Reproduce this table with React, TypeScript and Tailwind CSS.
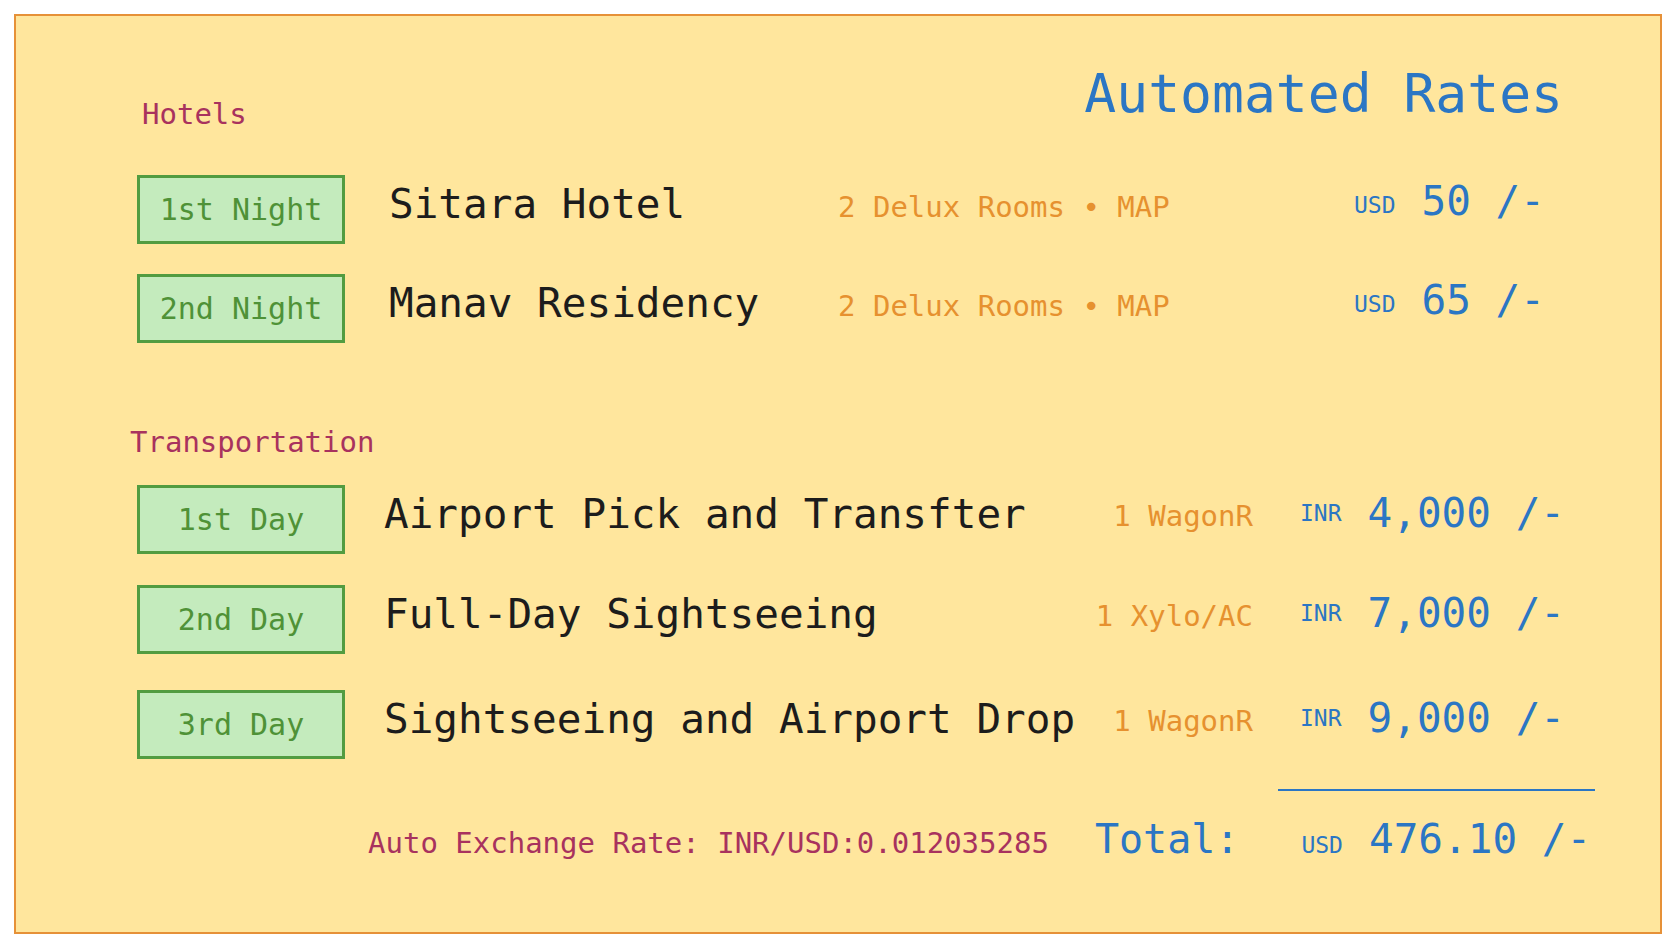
import React from "react";

interface Hotel {
  night: string;
  name: string;
  detalle: string;
  monto: string;
}

interface Transporte {
  dia: string;
  nombre: string;
  vehiculo: string;
  monto: string;
}

const hoteles: Hotel[] = [
  { night: "1st Night", name: "Sitara Hotel", detalle: "2 Delux Rooms • MAP", monto: "50 /-" },
  { night: "2nd Night", name: "Manav Residency", detalle: "2 Delux Rooms • MAP", monto: "65 /-" },
];

const transportes: Transporte[] = [
  { dia: "1st Day", nombre: "Airport Pick and Transfter", vehiculo: "1 WagonR", monto: "4,000 /-" },
  { dia: "2nd Day", nombre: "Full-Day Sightseeing", vehiculo: "1 Xylo/AC", monto: "7,000 /-" },
  { dia: "3rd Day", nombre: "Sightseeing and Airport Drop", vehiculo: "1 WagonR", monto: "9,000 /-" },
];

const mono = "font-['DejaVu_Sans_Mono','Liberation_Mono',monospace]";

function Badge({ texto }: { texto: string }) {
  return (
    <div className="w-[208px] h-[69px] shrink-0 flex items-center justify-center border-[3px] border-[#529c41] bg-[#c4ebbd] text-[#4f9237] text-[30px] leading-none">
      {texto}
    </div>
  );
}

export default function App() {
  return (
    <div className={`w-full h-[948px] bg-white pl-[14px] pt-[14px] ${mono}`}>
      <div className="w-[1648px] h-[920px] border-2 border-[#e69138] bg-[#ffe69d] pt-[51px] flex flex-col">
        <div className="flex items-start">
          <span className="ml-[126px] mt-[33px] text-[29px] leading-none text-[#a8325e]">Hotels</span>
          <span className="ml-auto mr-[97px] text-[53px] leading-none text-[#2b76c4]">Automated Rates</span>
        </div>

        {hoteles.map((h, i) => (
          <div key={h.night} className={`flex items-center ml-[121px] ${i === 0 ? "mt-[46px]" : "mt-[30px]"}`}>
            <Badge texto={h.night} />
            <span className="ml-[44px] w-[449px] mb-[10px] text-[41px] leading-none text-[#1c1c1c] whitespace-nowrap">
              {h.name}
            </span>
            <span className="w-[516px] mb-[4px] text-[29px] leading-none text-[#e6912f] whitespace-nowrap">
              {h.detalle}
            </span>
            <span className="mb-[8px] text-[23px] leading-none text-[#2b76c4]">USD</span>
            <span className="ml-[26px] mb-[16px] text-[41px] leading-none text-[#2b76c4] whitespace-nowrap">
              {h.monto}
            </span>
          </div>
        ))}

        <span className="ml-[114px] mt-[85px] text-[29px] leading-none text-[#a8325e]">Transportation</span>

        {transportes.map((t, i) => (
          <div
            key={t.dia}
            className={`flex items-center ml-[121px] ${i === 0 ? "mt-[28px]" : i === 1 ? "mt-[31px]" : "mt-[36px]"}`}
          >
            <Badge texto={t.dia} />
            <div className="ml-[39px] w-[869px] flex items-center justify-between">
              <span className="mb-[10px] text-[41px] leading-none text-[#1c1c1c] whitespace-nowrap">{t.nombre}</span>
              <span className="mb-[7px] text-[29px] leading-none text-[#e6912f] whitespace-nowrap">{t.vehiculo}</span>
            </div>
            <span className="ml-[47px] mb-[13px] text-[23px] leading-none text-[#2b76c4]">INR</span>
            <span className="ml-[26px] mb-[13px] text-[41px] leading-none text-[#2b76c4] whitespace-nowrap">
              {t.monto}
            </span>
          </div>
        ))}

        <div className="ml-[1262px] mt-[30px] w-[317px] h-[2px] bg-[#2b76c4]" />

        <div className="flex items-baseline mt-[28px]">
          <span className="ml-[352px] text-[29px] leading-none text-[#a8325e] whitespace-nowrap">
            Auto Exchange Rate: INR/USD:0.012035285
          </span>
          <span className="ml-[46px] text-[40px] leading-none text-[#2b76c4]">Total:</span>
          <span className="ml-[62px] text-[23px] leading-none text-[#2b76c4]">USD</span>
          <span className="ml-[26px] text-[41px] leading-none text-[#2b76c4] whitespace-nowrap">476.10 /-</span>
        </div>
      </div>
    </div>
  );
}
